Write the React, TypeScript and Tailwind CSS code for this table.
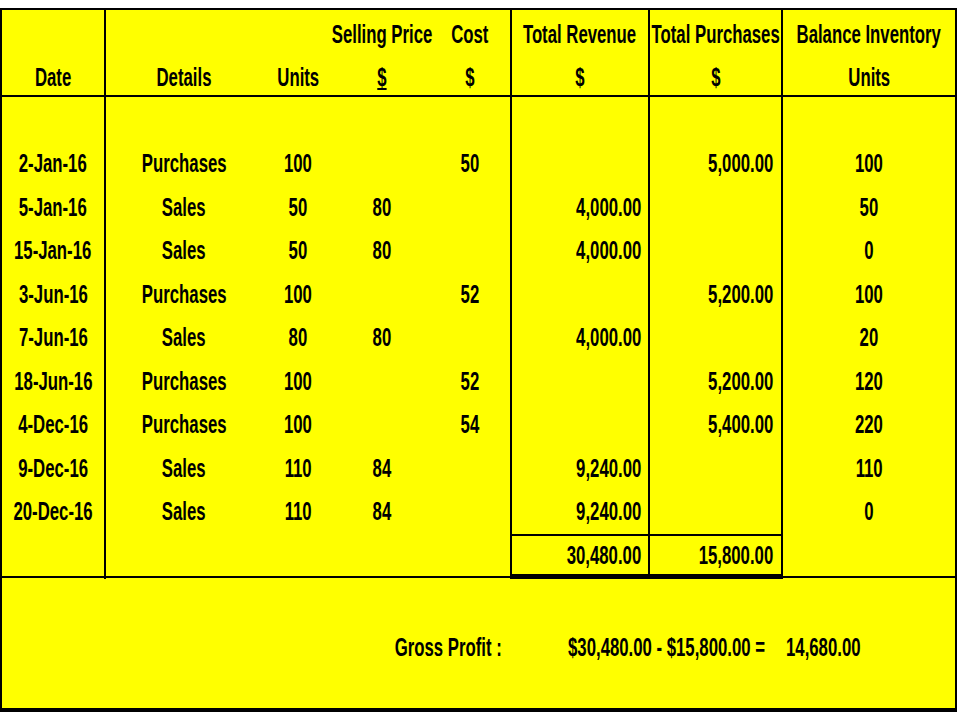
const font = "font-['Liberation_Sans','Arimo',sans-serif]";

const cols = "grid grid-cols-[104px_156px_72px_96px_80px_140px_133px_172px]";

type Row = {
  date: string;
  details: string;
  units: string;
  price?: string;
  cost?: string;
  revenue?: string;
  purchases?: string;
  balance: string;
};

const rows: Row[] = [
  { date: "2-Jan-16", details: "Purchases", units: "100", cost: "50", purchases: "5,000.00", balance: "100" },
  { date: "5-Jan-16", details: "Sales", units: "50", price: "80", revenue: "4,000.00", balance: "50" },
  { date: "15-Jan-16", details: "Sales", units: "50", price: "80", revenue: "4,000.00", balance: "0" },
  { date: "3-Jun-16", details: "Purchases", units: "100", cost: "52", purchases: "5,200.00", balance: "100" },
  { date: "7-Jun-16", details: "Sales", units: "80", price: "80", revenue: "4,000.00", balance: "20" },
  { date: "18-Jun-16", details: "Purchases", units: "100", cost: "52", purchases: "5,200.00", balance: "120" },
  { date: "4-Dec-16", details: "Purchases", units: "100", cost: "54", purchases: "5,400.00", balance: "220" },
  { date: "9-Dec-16", details: "Sales", units: "110", price: "84", revenue: "9,240.00", balance: "110" },
  { date: "20-Dec-16", details: "Sales", units: "110", price: "84", revenue: "9,240.00", balance: "0" },
];

// the sheet uses a narrow bold face; squeeze Liberation Sans to match
const T = ({
  children,
  origin = "origin-center",
  className = "",
}: {
  children?: React.ReactNode;
  origin?: string;
  className?: string;
}) => (
  <span className={`inline-block shrink-0 scale-x-[0.67] whitespace-nowrap ${origin} ${className}`}>{children}</span>
);

const Cell = ({
  children,
  align = "center",
  className = "",
}: {
  children?: React.ReactNode;
  align?: "center" | "right" | "left";
  className?: string;
}) => {
  const justify = align === "right" ? "justify-end" : align === "left" ? "justify-start" : "justify-center";
  const origin = align === "right" ? "origin-right" : align === "left" ? "origin-left" : "origin-center";
  return (
    <div className={`flex ${justify} ${className}`}>
      {children !== undefined && <T origin={origin}>{children}</T>}
    </div>
  );
};

const HeaderCell = ({
  top,
  bottom,
  underline,
  className = "",
}: {
  top?: string;
  bottom: string;
  underline?: boolean;
  className?: string;
}) => (
  <div className={`flex flex-col items-center pt-[3px] leading-[43px] ${className}`}>
    <span className="flex h-[43px] justify-center">{top && <T>{top}</T>}</span>
    <T className={underline ? "underline underline-offset-2" : ""}>{bottom}</T>
  </div>
);

export default function App() {
  return (
    <div className={`min-h-[720px] bg-white pt-[8px] ${font}`}>
      <div className="w-[957px] border-x-2 border-t-2 border-b-4 border-black bg-[#ffff00] text-[25px] font-bold text-black">
        {/* header */}
        <div className={`${cols} h-[87px] border-b-2 border-black`}>
          <HeaderCell bottom="Date" className="border-r-2 border-black" />
          <HeaderCell bottom="Details" />
          <HeaderCell bottom="Units" />
          <HeaderCell top="Selling Price" bottom="$" underline />
          <HeaderCell top="Cost" bottom="$" />
          <HeaderCell top="Total Revenue" bottom="$" className="border-x-2 border-black" />
          <HeaderCell top="Total Purchases" bottom="$" className="border-r-2 border-black" />
          <HeaderCell top="Balance Inventory" bottom="Units" />
        </div>

        {/* body */}
        <div className="border-b-2 border-black">
          <div className={`${cols} h-[45px]`}>
            <div className="border-r-2 border-black" />
            <div className="col-span-4" />
            <div className="border-x-2 border-black" />
            <div className="border-r-2 border-black" />
            <div />
          </div>
          {rows.map((r) => (
            <div key={r.date} className={`${cols} h-[43.5px] leading-[43.5px]`}>
              <Cell className="border-r-2 border-black">{r.date}</Cell>
              <Cell>{r.details}</Cell>
              <Cell>{r.units}</Cell>
              <Cell>{r.price}</Cell>
              <Cell>{r.cost}</Cell>
              <Cell align="right" className="border-x-2 border-black pr-[7px]">{r.revenue}</Cell>
              <Cell align="right" className="border-r-2 border-black pr-[8px]">{r.purchases}</Cell>
              <Cell>{r.balance}</Cell>
            </div>
          ))}
          <div className={`${cols} h-[42px] leading-[38px]`}>
            <div className="border-r-2 border-black" />
            <div className="col-span-4" />
            <Cell
              align="right"
              className="border-x-2 border-t-2 border-b-[5px] border-double border-black pr-[7px] [border-top-style:solid] [border-left-style:solid] [border-right-style:solid]"
            >
              30,480.00
            </Cell>
            <Cell
              align="right"
              className="border-r-2 border-t-2 border-b-[5px] border-double border-black pr-[8px] [border-top-style:solid] [border-right-style:solid]"
            >
              15,800.00
            </Cell>
            <div />
          </div>
        </div>

        {/* gross profit */}
        <div className={`${cols} h-[130px] items-center pt-[10px]`}>
          <Cell align="right" className="col-span-5 pr-[8px]">Gross Profit :</Cell>
          <Cell align="right" className="col-span-2 pr-[18px]">$30,480.00 - $15,800.00 =</Cell>
          <Cell align="left" className="pl-[3px]">14,680.00</Cell>
        </div>
      </div>
    </div>
  );
}
